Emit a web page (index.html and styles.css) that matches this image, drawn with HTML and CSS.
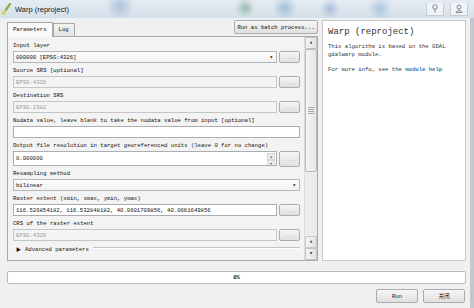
FILE: index.html
```html
<!DOCTYPE html>
<html lang="en">
<head>
    <title>Warp (reproject)</title>
    <link rel="stylesheet" href="styles.css">
</head>
<body>
    <div class="titlebar">
        <svg class="app-icon" width="10" height="12" viewBox="0 0 10 12">
            <path d="M1 11 L8 1" stroke="#7cb342" stroke-width="2.2" stroke-linecap="round"/>
            <path d="M1 11 L3 8" stroke="#e8d44d" stroke-width="2.2" stroke-linecap="round"/>
        </svg>
        <span class="title">Warp (reproject)</span>
        <div class="tb-icons">
            <span class="tb-icon">
                <svg width="8" height="9" viewBox="0 0 8 9"><circle cx="4" cy="3" r="2.3" fill="none" stroke="#777" stroke-width="0.9"/><path d="M4 5.5 V8.5" stroke="#777" stroke-width="0.9"/></svg>
            </span>
            <span class="tb-icon">
                <svg width="8" height="9" viewBox="0 0 8 9"><circle cx="4" cy="3" r="2" fill="none" stroke="#777" stroke-width="0.9"/><path d="M1 8.5 Q4 4 7 8.5 Z" fill="none" stroke="#777" stroke-width="0.9"/></svg>
            </span>
        </div>
    </div>

    <div class="window">
        <div class="main">
            <div class="left">
                <div class="tabbar">
                    <div class="tab active">Parameters</div>
                    <div class="tab">Log</div>
                    <div class="spacer"></div>
                    <button class="btn batch-btn">Run as batch process...</button>
                </div>
                <div class="panel">
                    <div class="form">
                        <div class="lbl">Input layer</div>
                        <div class="row">
                            <div class="field combo">000000 [EPSG:4326]<span class="drop">&#9662;</span></div>
                            <button class="btn dots">...</button>
                        </div>

                        <div class="lbl">Source SRS [optional]</div>
                        <div class="row">
                            <div class="field disabled">EPSG:4326</div>
                            <button class="btn dots">...</button>
                        </div>

                        <div class="lbl">Destination SRS</div>
                        <div class="row">
                            <div class="field disabled">EPSG:2382</div>
                            <button class="btn dots">...</button>
                        </div>

                        <div class="lbl">Nodata value, leave blank to take the nodata value from input [optional]</div>
                        <div class="row">
                            <div class="field"></div>
                        </div>

                        <div class="lbl">Output file resolution in target georeferenced units (leave 0 for no change)</div>
                        <div class="row spin-row">
                            <div class="field spin">0.000000
                                <span class="spin-arrows"><span>&#9652;</span><span>&#9662;</span></span>
                            </div>
                            <button class="btn dots">...</button>
                        </div>

                        <div class="lbl">Resampling method</div>
                        <div class="row">
                            <div class="field combo">bilinear<span class="drop">&#9662;</span></div>
                        </div>

                        <div class="lbl">Raster extent (xmin, xmax, ymin, ymax)</div>
                        <div class="row">
                            <div class="field">116.526854182, 116.532848182, 40.0601709856, 40.0661649856</div>
                            <button class="btn dots">...</button>
                        </div>

                        <div class="lbl">CRS of the raster extent</div>
                        <div class="row">
                            <div class="field disabled">EPSG:4326</div>
                            <button class="btn dots">...</button>
                        </div>

                        <div class="advanced">
                            <span class="arrow">&#9654;</span>
                            <span>Advanced parameters</span>
                            <span class="group-line"></span>
                        </div>
                    </div>

                    <div class="scrollbar">
                        <div class="sb-btn">&#9652;</div>
                        <div class="sb-thumb"><span class="grip"></span></div>
                        <div class="sb-track"></div>
                        <div class="sb-btn">&#9652;</div>
                        <div class="sb-btn">&#9662;</div>
                    </div>
                </div>
            </div>

            <div class="help">
                <h3>Warp (reproject)</h3>
                <p>This algorithm is based on the GDAL<br>gdalwarp module.</p>
                <p>For more info, see the <b class="link">module help</b></p>
            </div>
        </div>

        <div class="progress">0%</div>

        <div class="buttons">
            <button class="btn action">Run</button>
            <button class="btn action">关闭</button>
        </div>
    </div>
</body>
</html>
```

FILE: styles.css
```css
body {
    margin: 0;
    width: 474px;
    height: 308px;
    overflow: hidden;
    background: #e9edf1;
    font-family: "Liberation Mono", "Noto Sans CJK SC", monospace;
    color: #111;
}

.titlebar {
    height: 18px;
    display: flex;
    align-items: center;
    padding-left: 2px;
    background:
        radial-gradient(circle at 120px 6px, rgba(140, 170, 205, 0.6), transparent 14px),
        radial-gradient(circle at 245px 8px, rgba(90, 150, 110, 0.5), transparent 10px),
        radial-gradient(circle at 285px 8px, rgba(110, 160, 200, 0.55), transparent 12px),
        radial-gradient(circle at 330px 9px, rgba(120, 150, 200, 0.5), transparent 10px),
        radial-gradient(circle at 380px 9px, rgba(120, 170, 210, 0.5), transparent 12px),
        linear-gradient(#e4ebf2, #d6e0ea);
}

.app-icon {
    margin-right: 3px;
}

.title {
    font-family: "Liberation Sans", sans-serif;
    font-size: 7.5px;
    color: #1a1a1a;
}

.tb-icons {
    margin-left: auto;
    display: flex;
    gap: 6px;
    margin-right: 6px;
}

.tb-icon {
    width: 16px;
    height: 12px;
    display: flex;
    justify-content: center;
    align-items: center;
    background: rgba(255, 255, 255, 0.55);
    border: 1px solid rgba(160, 170, 180, 0.5);
    border-top: none;
}

.window {
    height: 290px;
    background: #f0f0f0;
    border-right: 4px solid #c2c8cf;
    padding: 2px 4px 0 7px;
    display: flex;
    flex-direction: column;
}

.main {
    height: 241px;
    display: flex;
    gap: 4px;
}

.left {
    width: 311px;
    display: flex;
    flex-direction: column;
}

.tabbar {
    height: 16px;
    display: flex;
    align-items: flex-end;
}

.tab {
    font-size: 5.6px;
    height: 12px;
    line-height: 12px;
    padding: 0 5px;
    border: 1px solid #a9a9a9;
    border-bottom: none;
    background: linear-gradient(#f2f2f2, #e2e2e2);
}

.tab.active {
    height: 14px;
    line-height: 14px;
    background: #fafafa;
    position: relative;
    top: 1px;
    z-index: 1;
}

.spacer {
    flex: 1;
}

.btn {
    font-family: "Liberation Mono", "Noto Sans CJK SC", monospace;
    font-size: 5.6px;
    color: #111;
    border: 1px solid #acacac;
    border-radius: 2px;
    background: linear-gradient(#f6f6f6, #e0e0e0);
    padding: 0;
    cursor: pointer;
}

.batch-btn {
    align-self: flex-start;
    width: 84px;
    height: 14px;
    margin-bottom: 2px;
}

.panel {
    flex: 1;
    display: flex;
    border: 1px solid #a9a9a9;
    background: #f3f3f3;
    overflow: hidden;
}

.form {
    flex: 1;
    padding: 4px 4px 0 5px;
}

.lbl {
    font-size: 5.6px;
    height: 10px;
    line-height: 10px;
    white-space: nowrap;
}

.row {
    height: 12px;
    display: flex;
    gap: 2px;
    margin-bottom: 3px;
}

.spin-row {
    height: 15px;
}

.field {
    flex: 1;
    position: relative;
    font-size: 5.6px;
    line-height: 11px;
    padding-left: 2px;
    background: #fff;
    border: 1px solid #abadb3;
    white-space: nowrap;
    overflow: hidden;
}

.field.disabled {
    background: #f4f4f4;
    border-color: #c5c5c5;
    color: #9a9a9a;
}

.field.spin {
    line-height: 13px;
}

.combo {
    background: linear-gradient(#fcfcfc, #f0f0f0);
    border-color: #b8b8b8;
}

.drop {
    position: absolute;
    right: 3px;
    top: 0;
    font-size: 6px;
    color: #111;
}

.spin-arrows {
    position: absolute;
    right: 1px;
    top: 1px;
    bottom: 1px;
    width: 8px;
    display: flex;
    flex-direction: column;
    font-size: 4.5px;
    line-height: 5px;
    text-align: center;
    color: #333;
}

.spin-arrows span {
    flex: 1;
    background: #ececec;
    border: 1px solid #d5d5d5;
    overflow: visible;
}

.dots {
    width: 21px;
    color: #aaa;
    letter-spacing: 0.5px;
}

.spin-row .dots {
    height: 16px;
}

.advanced {
    display: flex;
    align-items: center;
    gap: 4px;
    font-size: 5.6px;
    height: 10px;
    padding-left: 3px;
    margin-top: 2px;
}

.arrow {
    font-size: 5px;
}

.group-line {
    flex: 1;
    height: 0;
    border-top: 1px solid #c4c4c4;
    border-bottom: 1px solid #fff;
    margin-top: -2px;
}

.scrollbar {
    width: 12px;
    display: flex;
    flex-direction: column;
    background: #ececec;
    border-left: 1px solid #dcdcdc;
}

.sb-btn {
    height: 10px;
    font-size: 6px;
    line-height: 9px;
    text-align: center;
    color: #111;
    background: linear-gradient(90deg, #f4f4f4, #e4e4e4);
    border: 1px solid #c4c4c4;
    border-radius: 1px;
}

.sb-thumb {
    height: 121px;
    display: flex;
    justify-content: center;
    align-items: center;
    background: linear-gradient(90deg, #f5f5f5, #e6e6e6);
    border: 1px solid #b8b8b8;
    border-radius: 2px;
}

.grip {
    width: 6px;
    height: 7px;
    background: repeating-linear-gradient(#a8a8a8 0 1px, transparent 1px 2px);
}

.sb-track {
    flex: 1;
}

.help {
    flex: 1;
    background: #fff;
    border: 1px solid #c8c8c8;
    padding: 4px 5px;
    color: #333;
}

.help h3 {
    margin: 2px 0 6px;
    font-size: 9px;
    font-weight: normal;
}

.help p {
    margin: 0 0 7px;
    font-size: 5.6px;
    line-height: 8px;
}

.link {
    color: #2b7bb9;
}

.progress {
    margin-top: 10px;
    height: 11px;
    line-height: 11px;
    text-align: center;
    font-size: 5.6px;
    font-weight: bold;
    background: #fff;
    border: 1px solid #b9b9b9;
    border-radius: 2px;
    margin-right: 0;
}

.buttons {
    display: flex;
    justify-content: flex-end;
    gap: 5px;
    margin-top: 5px;
    margin-right: 1px;
}

.action {
    width: 42px;
    height: 14px;
}
```
